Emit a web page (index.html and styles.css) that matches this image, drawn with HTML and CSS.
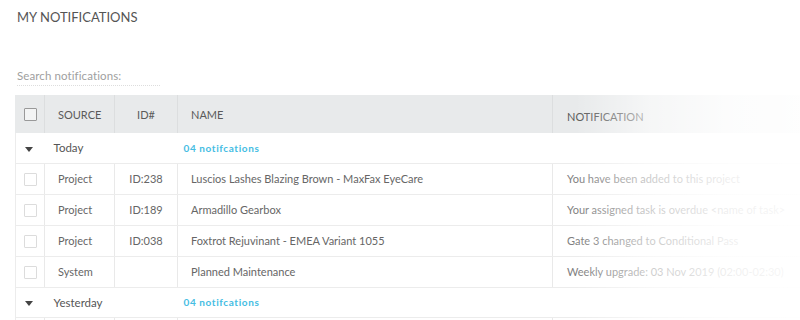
FILE: index.html
```html
<!DOCTYPE html>
<html>
<head>
<meta charset="utf-8">
<link rel="stylesheet" href="styles.css">
</head>
<body>
<div class="page">
  <h1 class="title">MY NOTIFICATIONS</h1>
  <div class="search">Search notifications:</div>
  <table class="grid">
    <colgroup>
      <col class="c-check"><col class="c-src"><col class="c-id"><col class="c-name"><col class="c-note">
    </colgroup>
    <thead>
      <tr>
        <th class="chk"><span class="box box-head"></span></th>
        <th>SOURCE</th>
        <th class="center">ID#</th>
        <th>NAME</th>
        <th class="note-h">NOTIFICATION</th>
      </tr>
    </thead>
    <tbody>
      <tr class="group">
        <td class="chk"><span class="caret"></span></td>
        <td colspan="2">Today</td>
        <td colspan="2" class="count">04 notifcations</td>
      </tr>
      <tr class="row">
        <td class="chk"><span class="box"></span></td>
        <td>Project</td>
        <td class="center">ID:238</td>
        <td>Luscios Lashes Blazing Brown - MaxFax EyeCare</td>
        <td class="note">You have been added to this project</td>
      </tr>
      <tr class="row">
        <td class="chk"><span class="box"></span></td>
        <td>Project</td>
        <td class="center">ID:189</td>
        <td>Armadillo Gearbox</td>
        <td class="note">Your assigned task is overdue &lt;name of task&gt;</td>
      </tr>
      <tr class="row">
        <td class="chk"><span class="box"></span></td>
        <td>Project</td>
        <td class="center">ID:038</td>
        <td>Foxtrot Rejuvinant - EMEA Variant 1055</td>
        <td class="note">Gate 3 changed to Conditional Pass</td>
      </tr>
      <tr class="row">
        <td class="chk"><span class="box"></span></td>
        <td>System</td>
        <td class="center"></td>
        <td>Planned Maintenance</td>
        <td class="note">Weekly upgrade: 03 Nov 2019 (02:00-02:30)</td>
      </tr>
      <tr class="group">
        <td class="chk"><span class="caret"></span></td>
        <td colspan="2">Yesterday</td>
        <td colspan="2" class="count">04 notifcations</td>
      </tr>
      <tr class="row">
        <td class="chk"></td>
        <td></td>
        <td></td>
        <td></td>
        <td></td>
      </tr>
    </tbody>
  </table>
  <div class="fade"></div>
</div>
</body>
</html>
```

FILE: styles.css
```css
html, body {
  margin: 0;
  padding: 0;
  background: #fff;
  overflow: hidden;
}
body {
  width: 800px;
  height: 320px;
  font-family: Lato, "Open Sans", sans-serif;
  color: #666;
}
.page {
  position: relative;
  width: 800px;
  height: 320px;
  padding: 0 0 0 15px;
  box-sizing: border-box;
  overflow: hidden;
}
.title {
  margin: 0;
  padding: 9px 0 0 2px;
  font-size: 13px;
  font-weight: 400;
  letter-spacing: 0;
  color: #555;
  line-height: 16px;
}
.search {
  margin: 44px 0 0 2px;
  width: 143px;
  font-size: 11.5px;
  line-height: 14px;
  color: #a0a0a0;
  letter-spacing: 0.1px;
  border-bottom: 1px dotted #ddd;
  padding-bottom: 2px;
}
.grid {
  margin-top: 9px;
  border-collapse: collapse;
  table-layout: fixed;
  width: 900px;
  font-size: 11px;
}
.c-check { width: 29px; }
.c-src { width: 70px; }
.c-id { width: 63px; }
.c-name { width: 375px; }
.c-note { width: 363px; }
th {
  background: #e8eaeb;
  height: 38px;
  padding: 0 0 0 13px;
  text-align: left;
  font-weight: 400;
  font-size: 11px;
  color: #5a5a5a;
  letter-spacing: 0;
  border-left: 1px solid #dcdedf;
  box-sizing: border-box;
}
th:first-child { border-left: 1px solid #e8eaeb; }
th.note-h { padding-left: 14px; padding-top: 4px; }
td {
  height: 31px;
  padding: 0 0 0 13px;
  border-left: 1px solid #e9e9e9;
  border-bottom: 1px solid #ececec;
  box-sizing: border-box;
  white-space: nowrap;
  overflow: hidden;
  color: #666;
}
td:first-child { border-left: 1px solid #ececec; }
td.note { padding-left: 14px; color: #808080; }
.center { text-align: center; padding-left: 0 !important; }
th.chk, td.chk { padding: 0; text-align: center; }
.box {
  display: inline-block;
  width: 11px;
  height: 11px;
  border: 1px solid #dcdcdc;
  border-radius: 1px;
  vertical-align: middle;
}
.box-head {
  width: 11px;
  height: 11px;
  border-color: #999;
  background: #f3f4f4;
}
.group td {
  height: 30px;
  border-left: none;
  color: #555;
  font-size: 11.5px;
}
.group td:first-child { border-left: 1px solid #ececec; }
.group td:nth-child(2) { padding-left: 9px; }
.group td.count {
  padding-left: 6px;
  font-size: 10px;
  font-weight: 700;
  letter-spacing: 0.6px;
  color: #45bde3;
}
.caret {
  display: inline-block;
  width: 0;
  height: 0;
  border-left: 4px solid transparent;
  border-right: 4px solid transparent;
  border-top: 5px solid #444;
  vertical-align: middle;
  margin-right: 2px;
}
.fade {
  position: absolute;
  top: 0;
  left: 0;
  width: 800px;
  height: 320px;
  pointer-events: none;
  background: linear-gradient(to right, rgba(255,255,255,0) 0px, rgba(255,255,255,0) 575px, rgba(255,255,255,0.6) 650px, rgba(255,255,255,0.88) 730px, rgba(255,255,255,0.94) 800px);
}
```
